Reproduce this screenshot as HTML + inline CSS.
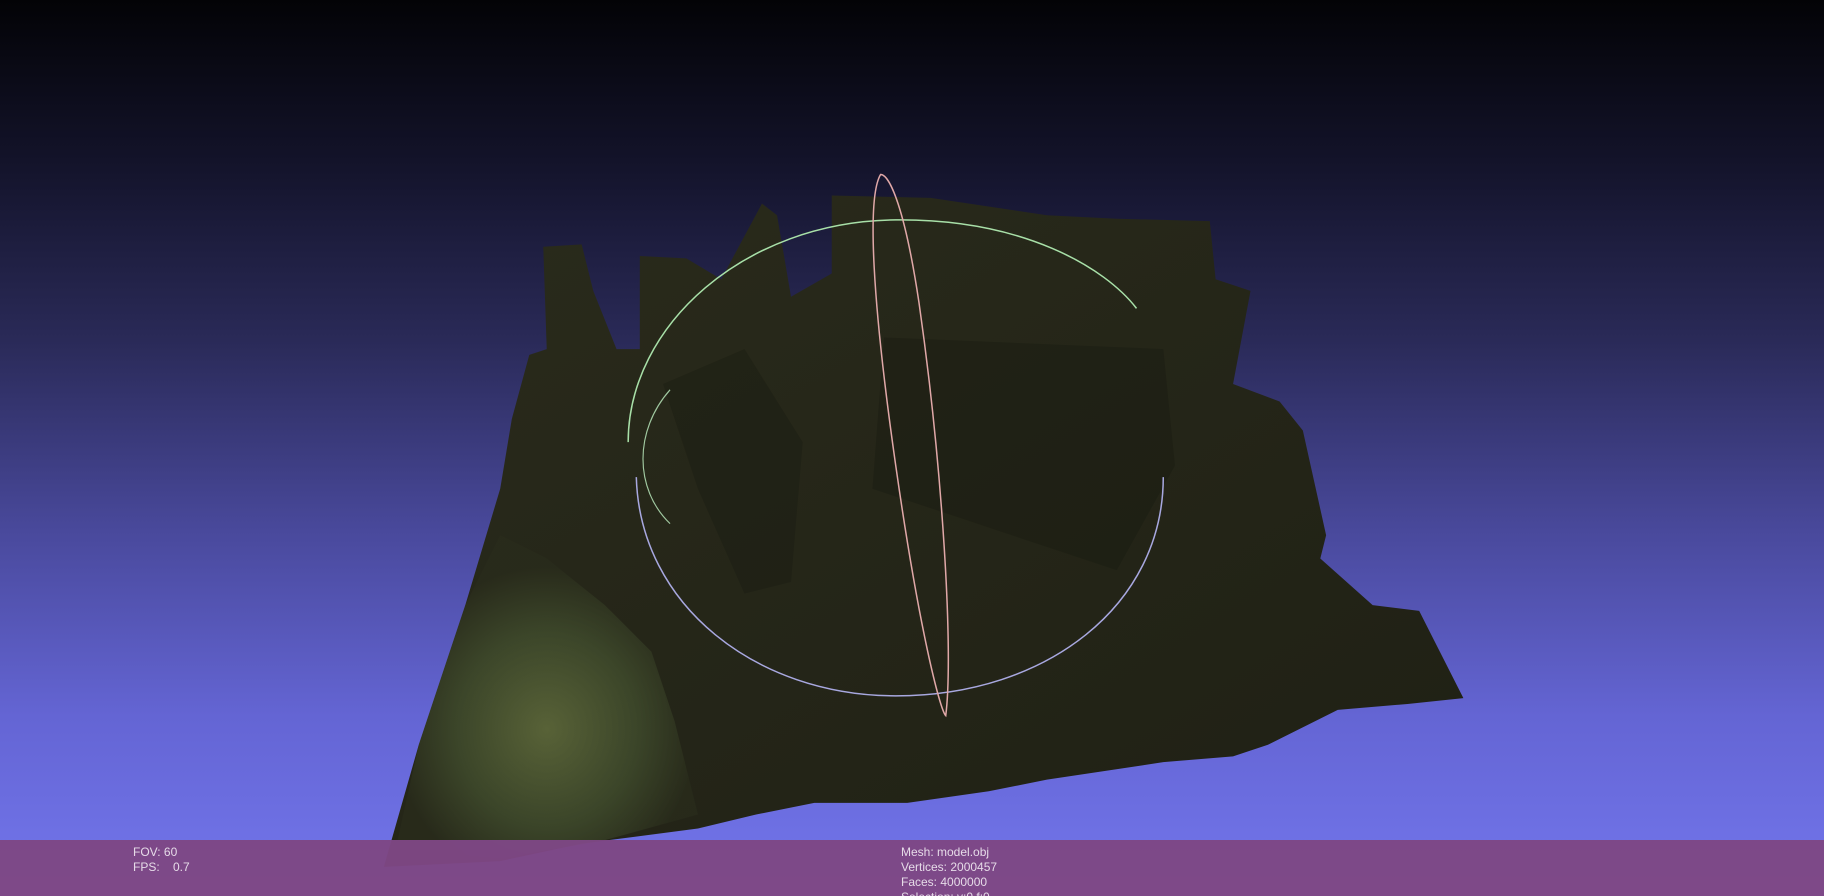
<!DOCTYPE html>
<html><head><meta charset="utf-8"><style>
html,body{margin:0;padding:0;width:1824px;height:896px;overflow:hidden;background:#7e4784}
#bg{position:absolute;left:0;top:0;width:1824px;height:896px;background:linear-gradient(#030306 0%,#13132a 18%,#2a2a58 38%,#4a4a9e 60%,#6465d4 80%,#7376ec 100%)}
svg{position:absolute;left:0;top:0}
#bar{position:absolute;left:0;top:840px;width:1824px;height:56px;background:rgba(126,71,132,0.97);overflow:hidden}
.t{position:absolute;font:12px/15px "Liberation Sans",sans-serif;color:#e6dbe8;white-space:pre}
</style></head><body>
<div id="bg"></div>
<svg width="1824" height="896" viewBox="0 0 1568 770" preserveAspectRatio="none">
<defs>
<linearGradient id="g1" x1="0" y1="0" x2="1" y2="1"><stop offset="0" stop-color="#2a2b1c"/><stop offset="1" stop-color="#1f2014"/></linearGradient>
<radialGradient id="g2" cx="0.5" cy="0.6" r="0.5"><stop offset="0" stop-color="#7a8a4c"/><stop offset="0.6" stop-color="#4a5a34"/><stop offset="1" stop-color="#2a2d1c"/></radialGradient>
</defs>
<polygon fill="url(#g1)" points="330,745 360,640 400,520 430,420 440,360 455,305 470,300 467,212 500,210 510,250 530,300 550,300 550,220 590,222 620,240 655,175 668,185 680,255 715,235 715,168 800,170 900,185 960,188 1040,190 1045,240 1075,250 1060,330 1100,345 1120,370 1140,460 1135,480 1180,520 1220,525 1258,600 1210,605 1150,610 1090,640 1060,650 1000,655 900,670 850,680 780,690 700,690 650,700 600,712 500,725 430,740"/>
<polygon fill="url(#g2)" opacity="0.6" points="340,730 360,640 400,520 430,460 470,480 520,520 560,560 580,620 600,700 520,722 430,738"/>
<polygon fill="#1a1b12" opacity="0.5" points="760,290 1000,300 1010,400 960,490 900,470 750,420"/>
<polygon fill="#1a1b12" opacity="0.4" points="570,330 640,300 690,380 680,500 640,510 600,420"/>
<path d="M540,380 C540,280 640,190 770,189 C880,188 950,230 977,265" fill="none" stroke="#a8e0a8" stroke-width="1.3"/>
<path d="M547,410 C550,520 650,598 770,598 C900,598 1000,520 1000,410" fill="none" stroke="#a8a8e0" stroke-width="1.3"/>
<path d="M576,335 C545,370 545,420 576,450" fill="none" stroke="#a0c8a0" stroke-width="1"/>
<path d="M757,150 C745,170 750,260 770,400 C790,540 808,610 813,615 C820,560 810,400 790,260 C778,180 765,150 757,150 Z" fill="none" stroke="#e0a8a8" stroke-width="1.3"/>
</svg>
<div id="bar">
<div class="t" style="left:133px;top:5px">FOV: 60</div>
<div class="t" style="left:133px;top:20px">FPS:    0.7</div>
<div class="t" style="left:901px;top:5px">Mesh: model.obj</div>
<div class="t" style="left:901px;top:20px">Vertices: 2000457</div>
<div class="t" style="left:901px;top:35px">Faces: 4000000</div>
<div class="t" style="left:901px;top:50px">Selection: v:0 f:0</div>
</div>
</body></html>
